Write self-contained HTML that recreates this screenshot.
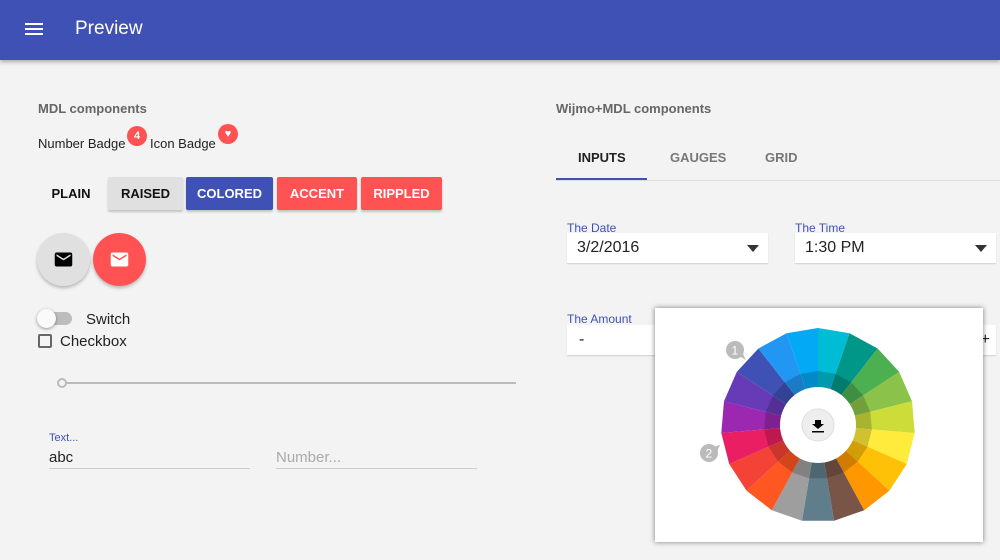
<!DOCTYPE html>
<html><head><meta charset="utf-8"><style>
*{box-sizing:border-box;margin:0;padding:0}
body{width:1000px;height:560px;background:#f3f3f3;font-family:"Liberation Sans",sans-serif;position:relative;overflow:hidden;color:#222}
.a{position:absolute;white-space:nowrap}
.hdr{left:0;top:0;width:1000px;height:60px;background:#3f51b5;box-shadow:0 2px 4px rgba(0,0,0,.3)}
.btn{position:absolute;top:177px;height:33px;line-height:33px;text-align:center;font-size:13px;font-weight:bold;border-radius:2px;color:#fff;box-shadow:0 2px 2px rgba(0,0,0,.2)}
.lbl{font-size:12px;color:#3f51b5}
.box{background:#fff;box-shadow:0 1px 1px rgba(0,0,0,.15);height:30px;font-size:16px;line-height:30px;padding-left:10px}
.tri{position:absolute;right:9px;top:12px;width:0;height:0;border-left:6px solid transparent;border-right:6px solid transparent;border-top:7px solid #333}
</style></head><body>
<div class="a hdr"></div>
<div class="a" style="left:25px;top:23px;width:18px;height:2px;background:#fff;box-shadow:0 5px 0 #fff,0 10px 0 #fff"></div>
<div class="a" style="left:75px;top:18px;font-size:19px;color:#fff">Preview</div>

<div class="a" style="left:38px;top:101px;font-size:13px;font-weight:bold;color:#666">MDL components</div>
<div class="a" style="left:38px;top:136px;font-size:13px">Number Badge</div>
<div class="a" style="left:127px;top:126px;width:20px;height:20px;border-radius:50%;background:#ff5252;color:#fff;font-size:11px;font-weight:bold;text-align:center;line-height:20px">4</div>
<div class="a" style="left:150px;top:136px;font-size:13px">Icon Badge</div>
<div class="a" style="left:218px;top:124px;width:20px;height:20px;border-radius:50%;background:#ff5252;color:#fff;font-size:11px;text-align:center;line-height:20px">♥</div>

<div class="btn" style="left:38px;width:66px;color:#111;box-shadow:none">PLAIN</div>
<div class="btn" style="left:108px;width:75px;background:#e0e0e0;color:#111">RAISED</div>
<div class="btn" style="left:186px;width:87px;background:#3f51b5">COLORED</div>
<div class="btn" style="left:277px;width:80px;background:#ff5252">ACCENT</div>
<div class="btn" style="left:361px;width:81px;background:#ff5252">RIPPLED</div>

<div class="a" style="left:37px;top:233px;width:53px;height:53px;border-radius:50%;background:#e0e0e0;box-shadow:0 2px 3px rgba(0,0,0,.25)"></div>
<svg class="a" style="left:53px;top:249px" width="21" height="21" viewBox="0 0 24 24"><path d="M20 4H4c-1.1 0-2 .9-2 2v12c0 1.1.9 2 2 2h16c1.1 0 2-.9 2-2V6c0-1.1-.9-2-2-2zm0 4l-8 5-8-5V6l8 5 8-5v2z" fill="#000"/></svg>
<div class="a" style="left:93px;top:233px;width:53px;height:53px;border-radius:50%;background:#ff5252;box-shadow:0 2px 3px rgba(0,0,0,.25)"></div>
<svg class="a" style="left:109px;top:249px" width="21" height="21" viewBox="0 0 24 24"><path d="M20 4H4c-1.1 0-2 .9-2 2v12c0 1.1.9 2 2 2h16c1.1 0 2-.9 2-2V6c0-1.1-.9-2-2-2zm0 4l-8 5-8-5V6l8 5 8-5v2z" fill="#fff"/></svg>

<div class="a" style="left:40px;top:312px;width:32px;height:13px;border-radius:7px;background:#bdbdbd"></div>
<div class="a" style="left:37px;top:309px;width:19px;height:19px;border-radius:50%;background:#fafafa;box-shadow:0 1px 3px rgba(0,0,0,.4)"></div>
<div class="a" style="left:86px;top:311px;font-size:15px">Switch</div>
<div class="a" style="left:38px;top:334px;width:14px;height:14px;border:2px solid #666;border-radius:2px"></div>
<div class="a" style="left:60px;top:333px;font-size:15px">Checkbox</div>

<div class="a" style="left:66px;top:382px;width:450px;height:2px;background:#bbb"></div>
<div class="a" style="left:57px;top:378px;width:10px;height:10px;border:2px solid #bbb;border-radius:50%;background:#f3f3f3"></div>

<div class="a" style="left:49px;top:432px;font-size:11px;color:#3f51b5">Text...</div>
<div class="a" style="left:49px;top:449px;font-size:15px">abc</div>
<div class="a" style="left:49px;top:468px;width:201px;height:1px;background:#ccc"></div>
<div class="a" style="left:276px;top:449px;font-size:15px;color:#aaa">Number...</div>
<div class="a" style="left:276px;top:468px;width:201px;height:1px;background:#ccc"></div>

<div class="a" style="left:556px;top:101px;font-size:13px;font-weight:bold;color:#666">Wijmo+MDL components</div>
<div class="a" style="left:578px;top:150px;font-size:13px;font-weight:bold;color:#222">INPUTS</div>
<div class="a" style="left:670px;top:150px;font-size:13px;font-weight:bold;color:#777">GAUGES</div>
<div class="a" style="left:765px;top:150px;font-size:13px;font-weight:bold;color:#777">GRID</div>
<div class="a" style="left:556px;top:180px;width:444px;height:1px;background:#ddd"></div>
<div class="a" style="left:556px;top:178px;width:91px;height:2px;background:#3f51b5"></div>

<div class="a lbl" style="left:567px;top:221px">The Date</div>
<div class="a box" style="left:567px;top:233px;width:201px">3/2/2016<div class="tri"></div></div>
<div class="a lbl" style="left:795px;top:221px">The Time</div>
<div class="a box" style="left:795px;top:233px;width:201px">1:30 PM<div class="tri"></div></div>
<div class="a lbl" style="left:567px;top:312px">The Amount</div>
<div class="a box" style="left:567px;top:325px;width:429px;padding-left:12px">-<span style="position:absolute;right:6px">+</span></div>

<div class="a" style="left:655px;top:308px;width:328px;height:234px;background:#fff;box-shadow:0 0 5px rgba(0,0,0,.5)"></div>
<svg class="a" style="left:655px;top:308px" width="328" height="234" id="pie"></svg>
<script>
var cols=["#00bcd4","#009688","#4caf50","#8bc34a","#cddc39","#ffeb3b","#ffc107","#ff9800","#795548","#607d8b","#9e9e9e","#ff5722","#f44336","#e91e63","#9c27b0","#673ab7","#3f51b5","#2196f3","#03a9f4"];
var cx=163,cy=117,R=97,M=54,r=38,n=19,s="";
function p(a,rad){a=a*Math.PI/180;return (cx+rad*Math.sin(a)).toFixed(1)+","+(cy-rad*Math.cos(a)).toFixed(1)}
for(var i=0;i<n;i++){var a0=i*360/n,a1=(i+1)*360/n;
s+='<polygon fill="'+cols[i]+'" points="'+p(a0,R)+' '+p(a1,R)+' '+p(a1,r)+' '+p(a0,r)+'"/>';
s+='<polygon fill="rgba(0,0,0,.18)" points="'+p(a0,M)+' '+p(a1,M)+' '+p(a1,r)+' '+p(a0,r)+'"/>';}
s+='<circle cx="'+cx+'" cy="'+cy+'" r="'+r+'" fill="#fff"/>';
s+='<circle cx="'+cx+'" cy="'+cy+'" r="16" fill="#eee" stroke="#ddd"/>';
s+='<path d="M160 112h6v4h3l-6 5-6-5h3z" fill="#000"/><rect x="157" y="123" width="12" height="1.5" fill="#000"/>';
s+='<circle cx="80" cy="42" r="9" fill="#bbb"/><path d="M84 48 L91 52 L87 44 z" fill="#bbb"/><text x="76.5" y="46.5" font-size="12" fill="#fff" font-family="Liberation Sans">1</text>';
s+='<circle cx="54" cy="145" r="9" fill="#bbb"/><path d="M58 139 L65 137 L61 146 z" fill="#bbb"/><text x="50.5" y="149.5" font-size="12" fill="#fff" font-family="Liberation Sans">2</text>';
document.getElementById('pie').innerHTML=s;
</script>
</body></html>
